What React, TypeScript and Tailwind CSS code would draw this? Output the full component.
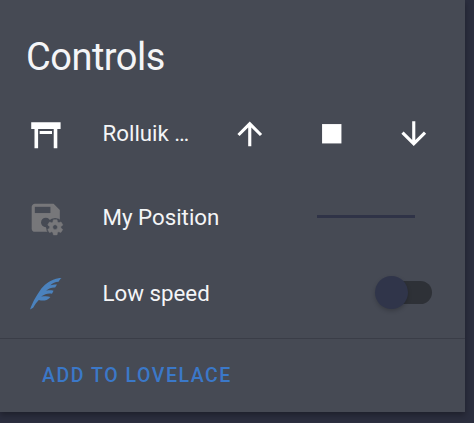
import type { ReactNode } from "react";

const ARROW_UP =
  "M13,20H11V8L5.5,13.5L4.08,12.08L12,4.16L19.92,12.08L18.5,13.5L13,8V20Z";
const STOP = "M18.2,18.2H5.8V5.8H18.2V18.2Z";
const ARROW_DOWN =
  "M11,4H13V16L18.5,10.5L19.92,11.92L12,19.84L4.08,11.92L5.5,10.5L11,16V4Z";
const TABLE = "M2.7,4.7H21.5V9H19.4V21.2H17.1V9H7.1V21.2H4.8V9H2.7ZM8.1,10.3H16V12.2H8.1Z";
const FEATHER =
  "M22,2C22,2 14.36,1.63 8.34,9.88C3.72,16.21 2,22 2,22L3.94,21C5.38,18.5 6.13,17.47 7.54,16C10.07,16.74 12.71,16.65 15,14C13,13.44 11.4,13.57 9.04,13.81C11.69,12 13.5,11.6 16,12L17,10C15.2,9.66 14,9.63 12.22,10.04C14.19,8.65 15.56,7.87 18,8L19.21,6.07C17.65,5.96 16.71,6.13 14.92,6.57C16.53,5.11 18,4.45 20.14,4.32C20.14,4.32 21.19,2.43 22,2Z";
const COG =
  "M21.7 18.6V17.6L22.8 16.8C22.9 16.7 23 16.6 22.9 16.5L21.9 14.8C21.9 14.7 21.7 14.7 21.6 14.7L20.4 15.2C20.1 15 19.8 14.8 19.5 14.7L19.3 13.4C19.3 13.3 19.2 13.2 19.1 13.2H17.1C16.9 13.2 16.8 13.3 16.8 13.4L16.6 14.7C16.3 14.9 16.1 15 15.8 15.2L14.6 14.7C14.5 14.7 14.4 14.7 14.3 14.8L13.3 16.5C13.3 16.6 13.3 16.7 13.4 16.8L14.5 17.6V18.6L13.4 19.4C13.3 19.5 13.2 19.6 13.3 19.7L14.3 21.4C14.4 21.5 14.5 21.5 14.6 21.5L15.8 21C16 21.2 16.3 21.4 16.6 21.5L16.8 22.8C16.9 22.9 17 23 17.1 23H19.1C19.2 23 19.3 22.9 19.3 22.8L19.5 21.5C19.8 21.3 20 21.2 20.3 21L21.5 21.4C21.6 21.4 21.7 21.4 21.8 21.3L22.8 19.6C22.9 19.5 22.9 19.4 22.8 19.4L21.7 18.6M18 19.5C17.2 19.5 16.5 18.8 16.5 18S17.2 16.5 18 16.5 19.5 17.2 19.5 18 18.8 19.5 18 19.5Z";

function Icon({ path }: { path: string }) {
  return (
    <svg viewBox="0 0 24 24" className="size-[37.5px] shrink-0" fill="currentColor">
      <path d={path} />
    </svg>
  );
}

function SaveCogIcon() {
  return (
    <svg viewBox="0 0 24 24" className="size-[37.5px] shrink-0" fill="currentColor">
      <mask id="disk-cutout">
        <path fill="white" d="M0 0H24V24H0Z" />
        <path fill="black" d="M5 5H15V9H5Z" />
        <circle cx="12" cy="15" r="3" fill="black" />
        <circle cx="18" cy="18" r="5.8" fill="black" />
      </mask>
      <path
        mask="url(#disk-cutout)"
        d="M17 3H5C3.9 3 3 3.9 3 5V19C3 20.1 3.9 21 5 21H21V7L17 3Z"
      />
      <path d={COG} stroke="currentColor" strokeWidth="0.3" />
    </svg>
  );
}

function EntityRow({
  icon,
  label,
  className,
  children,
}: {
  icon: ReactNode;
  label: string;
  className: string;
  children: ReactNode;
}) {
  return (
    <div className={`flex items-center pl-[27px] ${className}`}>
      {icon}
      <p className="ml-[38px] flex-1 whitespace-nowrap pb-0.5 text-[22.3px] leading-8">{label}</p>
      {children}
    </div>
  );
}

export default function App() {
  return (
    <main className="h-[423px] w-[474px] overflow-hidden bg-[#2b2e3e] font-[Roboto,sans-serif] text-[#f4f5f7]">
      <section className="flex h-[412px] w-[465px] flex-col bg-[#464a54] shadow-[0_3px_6px_rgba(0,0,0,0.3)]">
        <h1 className="pl-[26px] pt-8 text-[38px] leading-[50px] tracking-[-0.5px]">Controls</h1>

        <EntityRow
          className="mt-[19.5px] h-16 pr-[33px]"
          label="Rolluik …"
          icon={<span className="text-white"><Icon path={TABLE} /></span>}
        >
          <div className="flex gap-[44.2px] text-white">
            <button aria-label="Open"><Icon path={ARROW_UP} /></button>
            <button aria-label="Stop"><Icon path={STOP} /></button>
            <button aria-label="Close"><Icon path={ARROW_DOWN} /></button>
          </div>
        </EntityRow>

        <EntityRow
          className="mt-[20.5px] h-16 pr-[50px]"
          label="My Position"
          icon={<span className="text-[#77777a]"><SaveCogIcon /></span>}
        >
          <div className="mb-[3px] h-[3px] w-[98px] bg-[#2f3347]" />
        </EntityRow>

        <EntityRow
          className="mt-3 h-16 pr-[33px]"
          label="Low speed"
          icon={<span className="text-[#4b82bd]"><Icon path={FEATHER} /></span>}
        >
          <div className="mb-[3px] flex h-[23px] w-[54px] items-center rounded-full bg-[#2e3137]">
            <div className="-ml-[3px] size-[33px] shrink-0 rounded-full bg-[#30354a] shadow-[0_2px_4px_rgba(0,0,0,0.2)]" />
          </div>
        </EntityRow>

        <div className="mt-3 flex flex-1 items-center border-t border-[#3a3d47] pl-[42px]">
          <button className="text-[19.5px] font-medium tracking-[1.55px] text-[#3b78c8]">
            ADD TO LOVELACE
          </button>
        </div>
      </section>
    </main>
  );
}
